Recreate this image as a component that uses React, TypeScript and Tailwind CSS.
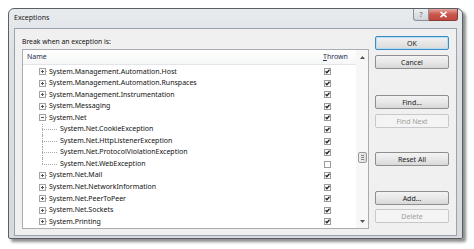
import type { FC, ReactNode } from "react";

type Row = {
  label: string;
  kind: "closed" | "open" | "leaf";
  last?: boolean;
  checked: boolean;
};

const rows: Row[] = [
  { label: "System.Management.Automation.Host", kind: "closed", checked: true },
  { label: "System.Management.Automation.Runspaces", kind: "closed", checked: true },
  { label: "System.Management.Instrumentation", kind: "closed", checked: true },
  { label: "System.Messaging", kind: "closed", checked: true },
  { label: "System.Net", kind: "open", checked: true },
  { label: "System.Net.CookieException", kind: "leaf", checked: true },
  { label: "System.Net.HttpListenerException", kind: "leaf", checked: true },
  { label: "System.Net.ProtocolViolationException", kind: "leaf", checked: true },
  { label: "System.Net.WebException", kind: "leaf", last: true, checked: false },
  { label: "System.Net.Mail", kind: "closed", checked: true },
  { label: "System.Net.NetworkInformation", kind: "closed", checked: true },
  { label: "System.Net.PeerToPeer", kind: "closed", checked: true },
  { label: "System.Net.Sockets", kind: "closed", checked: true },
  { label: "System.Printing", kind: "closed", checked: true },
];

const Expander: FC<{ open: boolean }> = ({ open }) => (
  <svg width="9" height="7" viewBox="0 0 9 7" className="shrink-0">
    <rect x="0.5" y="0.5" width="6" height="6" fill="#fafafa" stroke="#a4a4a4" />
    <path d="M2 3.5h3" stroke="#555" />
    {!open && <path d="M3.5 2v3" stroke="#555" />}
    <path d="M7 3.5h2" stroke="#a8a8a8" strokeDasharray="1 1" />
  </svg>
);

const Check: FC<{ checked: boolean }> = ({ checked }) => (
  <svg width="7" height="7" viewBox="0 0 7 7" className="shrink-0">
    <rect x="0.5" y="0.5" width="6" height="6" fill="#fdfdfd" stroke="#9a9b9b" />
    {checked && <path d="M1.6 3.3l1.3 1.5 2.6-3" fill="none" stroke="#222" strokeWidth="1.3" />}
  </svg>
);

const Button: FC<{ children: ReactNode; primary?: boolean; disabled?: boolean; className?: string }> = ({
  children,
  primary,
  disabled,
  className,
}) => (
  <div
    className={`h-[14px] w-[74px] rounded-[2px] border flex items-center justify-center text-[7px] leading-none ${
      disabled
        ? "border-[#c6c9cc] bg-[#f4f4f4] text-[#a0a0a0]"
        : primary
          ? "border-[#3c8cc3] bg-[linear-gradient(#f3f3f3,#e6e6e6_50%,#dadada)] text-[#222] shadow-[inset_0_0_0_1px_#b4def5]"
          : "border-[#8e8e8e] bg-[linear-gradient(#f3f3f3,#e8e8e8_50%,#d8d8d8)] text-[#222]"
    } ${className ?? ""}`}
  >
    {children}
  </div>
);

const Tree: FC = () => (
  <div className="flex-1 flex flex-col min-w-0">
    <div className="h-[15px] shrink-0 flex items-center bg-[linear-gradient(#ffffff,#f6f7f8)] border-b border-[#e3e5e8] text-[7px] text-[#1e3050]">
      <span className="pl-[4px] w-[300px]">Name</span>
      <span>
        <span className="underline">T</span>hrown
      </span>
    </div>
    <div className="flex-1 overflow-hidden pt-[1px]">
      {rows.map((r, i) => (
        <div key={i} className="h-[11.55px] flex items-center text-[7px] text-[#111]">
          <div className="w-[301px] flex items-center self-stretch">
            {r.kind === "leaf" ? (
              <div className="flex items-center pl-[19px] self-stretch relative">
                <span
                  className={`absolute left-[18.5px] top-0 w-px border-l border-dotted border-[#a8a8a8] ${
                    r.last ? "h-1/2" : "h-full"
                  }`}
                />
                <span className="w-[15px] border-t border-dotted border-[#a8a8a8] mr-[3px]" />
                <span className="whitespace-nowrap">{r.label}</span>
              </div>
            ) : (
              <div className="flex items-center pl-[16px]">
                <Expander open={r.kind === "open"} />
                <span className="whitespace-nowrap pl-[1px]">{r.label}</span>
              </div>
            )}
          </div>
          <Check checked={r.checked} />
        </div>
      ))}
    </div>
  </div>
);

const ScrollBar: FC = () => (
  <div className="w-[12px] shrink-0 bg-[#f7f7f7] flex flex-col items-center">
    <div className="h-[14px] flex items-center justify-center">
      <svg width="5" height="3" viewBox="0 0 5 3">
        <path d="M0 3l2.5-3 2.5 3z" fill="#555" />
      </svg>
    </div>
    <div className="flex-1 w-full flex flex-col items-center">
      <div className="h-[88px]" />
      <div className="w-[9px] h-[11px] rounded-[2px] border border-[#9a9a9a] bg-[linear-gradient(90deg,#eeeeee,#dcdcdc)] flex flex-col items-center justify-center gap-[1px]">
        <span className="w-[3px] h-px bg-[#888]" />
        <span className="w-[3px] h-px bg-[#888]" />
        <span className="w-[3px] h-px bg-[#888]" />
      </div>
    </div>
    <div className="h-[12px] flex items-center justify-center">
      <svg width="5" height="3" viewBox="0 0 5 3">
        <path d="M0 0l2.5 3 2.5-3z" fill="#555" />
      </svg>
    </div>
  </div>
);

export default function App() {
  return (
    <div
      className="w-[474px] h-[249px] bg-white overflow-hidden pt-[8px] pl-[8px]"
      style={{ fontFamily: '"Noto Sans", "Open Sans", sans-serif' }}
    >
      <div className="w-[455px] h-[231px] rounded-t-[6px] rounded-b-[2px] border border-[#5a5f66] bg-[linear-gradient(#e8ebee,#dde0e4_20%,#d6d9dd)] shadow-[3px_3px_3px_rgba(0,0,0,0.45)] flex flex-col">
        <div className="h-[19px] shrink-0 flex items-start">
          <span className="pl-[5px] pt-[5px] text-[7px] leading-none text-[#1a1a1a]">Exceptions</span>
          <div className="ml-auto mr-[4px] flex">
            <div className="w-[16px] h-[12px] rounded-bl-[3px] border border-t-0 border-[#8a9098] bg-[linear-gradient(#eceef0,#cfd3d8)] flex items-center justify-center text-[7px] leading-none text-[#666]">
              ?
            </div>
            <div className="w-[29px] h-[12px] rounded-br-[3px] border border-t-0 border-l-0 border-[#8a3b35] bg-[linear-gradient(#e6a69c,#c9564b_50%,#c2473d)] flex items-center justify-center">
              <svg width="9" height="7" viewBox="0 0 9 7">
                <path d="M1.5 0.8l6 5.4M7.5 0.8l-6 5.4" stroke="#fff" strokeWidth="1.6" />
              </svg>
            </div>
          </div>
        </div>
        <div className="mx-[5px] mb-[7px] flex-1 border border-[#9ba3ad] bg-[#f0f0f0] flex px-[7px] pt-[7px] pb-[6px] gap-[6px]">
          <div className="flex-1 flex flex-col">
            <div className="h-[13px] flex items-center text-[6.8px] text-[#111]">Break when an exception is:</div>
            <div className="flex-1 border border-[#a9acb2] bg-white flex overflow-hidden">
              <Tree />
              <ScrollBar />
            </div>
          </div>
          <div className="w-[74px] flex flex-col">
            <Button primary>OK</Button>
            <Button className="mt-[5px]">Cancel</Button>
            <Button className="mt-[26px]">Find...</Button>
            <Button className="mt-[5px]" disabled>
              Find Next
            </Button>
            <Button className="mt-[24px]">Reset All</Button>
            <Button className="mt-[25px]">Add...</Button>
            <Button className="mt-[4px]" disabled>
              Delete
            </Button>
          </div>
        </div>
      </div>
    </div>
  );
}
